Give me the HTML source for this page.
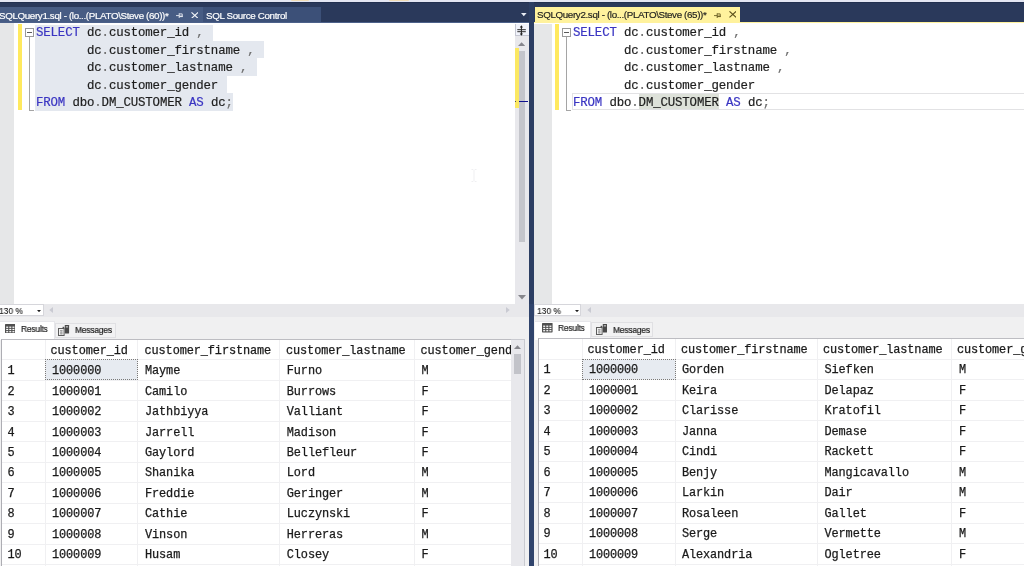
<!DOCTYPE html><html lang="en"><head><meta charset="utf-8"><title>SQL Server Management Studio</title><style>
*{box-sizing:border-box;margin:0;padding:0}
html,body{width:1024px;height:566px;overflow:hidden;background:#fff}
body{position:relative;font-family:"Liberation Sans", "DejaVu Sans", sans-serif;}
.a{position:absolute}
.ed,.gt,.tab,.ui{will-change:transform}
.ed{font-family:"Liberation Mono", "DejaVu Sans Mono", monospace;font-size:12.4px;letter-spacing:-0.15px;-webkit-text-stroke:0.2px;line-height:17.5px;white-space:pre;color:#1e1e1e;}
.ed .k{color:#3a35c2}
.ed .g{color:#6e6e6e}
.gr{font-family:"Liberation Mono", "DejaVu Sans Mono", monospace;font-size:11.9px;letter-spacing:-0.1px;-webkit-text-stroke:0.25px;line-height:20px;white-space:pre;color:#1a1a1a;}
.tab{font-family:"Liberation Sans", "DejaVu Sans", sans-serif;font-size:9.8px;letter-spacing:-0.36px;-webkit-text-stroke:0.18px;white-space:pre;line-height:16px}
.ui{font-family:"Liberation Sans", "DejaVu Sans", sans-serif;font-size:9.4px;transform:scaleX(0.9);transform-origin:0 0;white-space:pre;color:#1e1e1e}
</style></head><body>
<div class="a" style="left:0px;top:0px;width:1024px;height:3px;background:#e3e6f3;"></div>
<div class="a" style="left:0px;top:2.2px;width:1024px;height:21.2px;background:#2a395b;"></div>
<div class="a" style="left:0px;top:2.2px;width:1024px;height:1.3px;background:#223050;"></div>
<div class="a" style="left:290.5px;top:0px;width:18.5px;height:1.4px;background:#f0dcb6;border-radius:0 0 9px 9px"></div>
<div class="a" style="left:389px;top:0px;width:19.5px;height:1.4px;background:#f0dcb6;border-radius:0 0 9px 9px"></div>
<div class="a" style="left:0px;top:7px;width:202.5px;height:16.4px;background:#475c84;"></div>
<div class="a" style="left:202.5px;top:7px;width:118.5px;height:15px;background:#3c5078;"></div>
<div class="a" style="left:0px;top:22.1px;width:528.5px;height:1.3px;background:#4c618a;"></div>
<div class="a tab" style="left:-1px;top:7.6px;color:#fff">SQLQuery1.sql - (lo...(PLATO\Steve (60))*</div>
<div class="a tab" style="left:206px;top:7.6px;color:#fff">SQL Source Control</div>
<svg class="a" style="left:176.3px;top:12.8px" width="6.8" height="5.4" viewBox="0 0 6.8 5.4"><path d="M0 2.6H3.2M3.2 0.3V5.2M3.2 0.9H6.2V3.4M3.2 3.6H6.7" fill="none" stroke="#e6eaf2" stroke-width="0.9"/><path d="M3.2 3.2H6.7" stroke="#e6eaf2" stroke-width="1.1"/></svg>
<svg class="a" style="left:190.8px;top:11.5px" width="7.6" height="6.8" viewBox="0 0 7.6 6.8"><path d="M0.5 0.4L7.1 6.4M7.1 0.4L0.5 6.4" fill="none" stroke="#f0f3f8" stroke-width="1.15"/></svg>
<div class="a" style="left:535px;top:7px;width:205px;height:16.4px;background:#fff29d;"></div>
<div class="a" style="left:534px;top:22px;width:490px;height:1.4px;background:#fff29d;"></div>
<div class="a tab" style="left:536.6px;top:7.2px;color:#1e1e1e">SQLQuery2.sql - (lo...(PLATO\Steve (65))*</div>
<svg class="a" style="left:714.2px;top:12.9px" width="6.8" height="5.4" viewBox="0 0 6.8 5.4"><path d="M0 2.6H3.2M3.2 0.3V5.2M3.2 0.9H6.2V3.4M3.2 3.6H6.7" fill="none" stroke="#6a5d24" stroke-width="0.9"/><path d="M3.2 3.2H6.7" stroke="#6a5d24" stroke-width="1.1"/></svg>
<svg class="a" style="left:728.6px;top:11.4px" width="7.6" height="6.8" viewBox="0 0 7.6 6.8"><path d="M0.5 0.4L7.1 6.4M7.1 0.4L0.5 6.4" fill="none" stroke="#5a4e1a" stroke-width="1.15"/></svg>
<svg class="a" style="left:521px;top:13.2px" width="5.6" height="3.4" viewBox="0 0 7 4"><path d="M0 0H7L3.5 4Z" fill="#e8ecf4"/></svg>
<div class="a" style="left:528.5px;top:2.5px;width:5.5px;height:564px;background:#2d406a;"></div>
<div class="a" style="left:0px;top:23.4px;width:14px;height:280.6px;background:#e6e7e8;"></div>
<div class="a" style="left:17.5px;top:23.5px;width:4.5px;height:86.5px;background:#ffe95e;"></div>
<div class="a" style="left:35px;top:25.3px;width:177.7px;height:15.4px;background:#e4e8ef;"></div>
<div class="a" style="left:35px;top:40.7px;width:229px;height:17.5px;background:#e4e8ef;"></div>
<div class="a" style="left:35px;top:58.2px;width:221.7px;height:17.5px;background:#e4e8ef;"></div>
<div class="a" style="left:35px;top:75.7px;width:192.3px;height:17.5px;background:#e4e8ef;"></div>
<div class="a" style="left:35px;top:93.2px;width:197.7px;height:17.5px;background:#e4e8ef;"></div>
<div class="a" style="left:24.5px;top:28px;width:9px;height:9px;background:#fff;border:1px solid #9a9a9a"></div><div class="a" style="left:26.5px;top:32px;width:5px;height:1px;background:#5a5a5a;"></div><div class="a" style="left:28.5px;top:37px;width:1px;height:73.5px;background:#a5a5a5;"></div><div class="a" style="left:28.5px;top:110px;width:5px;height:1px;background:#a5a5a5;"></div>
<div class="a ed" style="left:35.7px;top:25.0px"><span class="k">SELECT</span> dc<span class="g">.</span>customer_id <span class="g">,</span>
       dc<span class="g">.</span>customer_firstname <span class="g">,</span>
       dc<span class="g">.</span>customer_lastname <span class="g">,</span>
       dc<span class="g">.</span>customer_gender
<span class="k">FROM</span> dbo<span class="g">.</span>DM_CUSTOMER <span class="k">AS</span> dc<span class="g">;</span></div>
<div class="a" style="left:515px;top:23.5px;width:13.5px;height:280.5px;background:#e8e8ec;"></div>
<div class="a" style="left:515px;top:23.7px;width:13.5px;height:12.6px;background:#f1f3fb;border:1px solid #c5c7d2;border-top:none;border-right:none"></div>
<svg class="a" style="left:516px;top:24.6px" width="11" height="11" viewBox="0 0 11 11"><path d="M5.4 1V10" stroke="#1e1e1e" stroke-width="1" fill="none"/><path d="M5.4 0.3L7 2.4H3.8ZM5.4 10.7L7 8.6H3.8Z" fill="#1e1e1e"/><path d="M1.3 4.7H9.8M1.3 6.7H9.8" stroke="#2a2a2a" stroke-width="1"/></svg>
<svg class="a" style="left:517.9px;top:41.8px" width="7.2" height="4" viewBox="0 0 7.2 4"><path d="M0 4H7.2L3.6 0.2Z" fill="#85858c"/></svg>
<div class="a" style="left:518.6px;top:50.5px;width:6.3px;height:191.5px;background:#c4c5cb;"></div>
<div class="a" style="left:515px;top:48.2px;width:3.6px;height:60px;background:#fbe862;"></div>
<div class="a" style="left:518.8px;top:100.8px;width:9.7px;height:1.6px;background:#10108e;"></div>
<div class="a" style="left:514.9px;top:101px;width:1.2px;height:1.2px;background:#4a4a55;"></div>
<svg class="a" style="left:518px;top:295px" width="8" height="5" viewBox="0 0 8 5"><path d="M0 0H8L4 4.5Z" fill="#86868c"/></svg>
<svg class="a" style="left:471px;top:169px" width="6" height="13" viewBox="0 0 6 13"><path d="M0.5 0.5H2.3M3.7 0.5H5.5M3 1V12M0.5 12.5H2.3M3.7 12.5H5.5" fill="none" stroke="#efeff1" stroke-width="1"/></svg>
<div class="a" style="left:534px;top:23.5px;width:18px;height:280.5px;background:#e6e7e8;"></div>
<div class="a" style="left:554.8px;top:23.5px;width:4.7px;height:86.5px;background:#ffe95e;"></div>
<div class="a" style="left:562px;top:28px;width:9px;height:9px;background:#fff;border:1px solid #9a9a9a"></div><div class="a" style="left:564px;top:32px;width:5px;height:1px;background:#5a5a5a;"></div><div class="a" style="left:566px;top:37px;width:1px;height:73.5px;background:#a5a5a5;"></div><div class="a" style="left:566px;top:110px;width:5px;height:1px;background:#a5a5a5;"></div>
<div class="a" style="left:571.5px;top:93.2px;width:460px;height:16.8px;background:#fff;border:1px solid #e2e2e4"></div>
<div class="a" style="left:638.6px;top:94px;width:80.3px;height:15.2px;background:#dde1d9;"></div>
<div class="a ed" style="left:573px;top:25.0px"><span class="k">SELECT</span> dc<span class="g">.</span>customer_id <span class="g">,</span>
       dc<span class="g">.</span>customer_firstname <span class="g">,</span>
       dc<span class="g">.</span>customer_lastname <span class="g">,</span>
       dc<span class="g">.</span>customer_gender
<span class="k">FROM</span> dbo<span class="g">.</span>DM_CUSTOMER <span class="k">AS</span> dc<span class="g">;</span></div>
<div class="a" style="left:0px;top:304px;width:528.5px;height:262px;background:#f0f0f1;"></div>
<div class="a" style="left:534px;top:304px;width:490px;height:262px;background:#f0f0f1;"></div>
<div class="a" style="left:0px;top:304px;width:528.5px;height:12.7px;background:#e8e8eb;"></div><div class="a" style="left:-3.6px;top:303.7px;width:47.2px;height:12.6px;background:#fff;border:1px solid #d6d6db"></div><div class="a ui" style="left:-0.8000000000000003px;top:304.5px;line-height:12px;-webkit-text-stroke:0.15px">130 %</div><svg class="a" style="left:37.199999999999996px;top:309.8px" width="4" height="2.2" viewBox="0 0 4 2.2"><path d="M0 0H4L2 2.2Z" fill="#1e1e1e"/></svg><svg class="a" style="left:49.199999999999996px;top:307.3px" width="4" height="6" viewBox="0 0 4 6"><path d="M4 0V6L0.3 3Z" fill="#c9cad2"/></svg><svg class="a" style="left:505.5px;top:307.3px" width="4" height="6" viewBox="0 0 4 6"><path d="M0 0V6L3.7 3Z" fill="#c9cad2"/></svg><div class="a" style="left:-2.3px;top:321.2px;width:56.9px;height:19px;background:#fff;border-top:1px solid #e6e6ea;border-right:1px solid #e6e6ea"></div><div class="a" style="left:54.599999999999994px;top:322.5px;width:61.3px;height:15.3px;background:#f2f2f3;border:1px solid #e0e0e3"></div><svg class="a" style="left:4.65px;top:324.0px" width="10.6" height="9.4" viewBox="0 0 10.6 9.4"><rect x="0" y="0" width="10.6" height="9.4" rx="0.6" fill="#505050"/><rect x="1.2" y="2.6" width="2" height="1.25" fill="#fff"/><rect x="4.3" y="2.6" width="2" height="1.25" fill="#fff"/><rect x="7.4" y="2.6" width="2" height="1.25" fill="#fff"/><rect x="1.2" y="4.85" width="2" height="1.25" fill="#fff"/><rect x="4.3" y="4.85" width="2" height="1.25" fill="#fff"/><rect x="7.4" y="4.85" width="2" height="1.25" fill="#fff"/><rect x="1.2" y="7.1" width="2" height="1.25" fill="#fff"/><rect x="4.3" y="7.1" width="2" height="1.25" fill="#fff"/><rect x="7.4" y="7.1" width="2" height="1.25" fill="#fff"/></svg><div class="a ui" style="left:20.5px;top:323.15px;line-height:12px;letter-spacing:-0.25px;-webkit-text-stroke:0.2px">Results</div><svg class="a" style="left:58.3px;top:324.7px" width="11.4" height="11" viewBox="0 0 11.4 11"><rect x="0.5" y="3.5" width="5.6" height="7" fill="#f1f1f1" stroke="#5c5c5c"/><path d="M2 5.6H4.6M2 7.2H4.6M2 8.8H4.6" stroke="#8a8a8a" stroke-width="0.8"/><rect x="2.6" y="5" width="1.6" height="4.6" fill="#9c9c9c" opacity="0.55"/><rect x="6.8" y="0.1" width="4.3" height="8.3" rx="0.4" fill="#484848"/><rect x="7.8" y="1" width="2.3" height="1.6" fill="#a9a9a9"/><rect x="4.6" y="1.8" width="1.7" height="1.9" fill="#505050"/></svg><div class="a ui" style="left:75.2px;top:324.4px;line-height:12px;letter-spacing:-0.22px;-webkit-text-stroke:0.2px">Messages</div><div class="a" style="left:0.5px;top:339px;width:524.5px;height:227px;background:#fff;border-top:1px solid #bdbdc2;border-left:1px solid #adadb3"></div><div class="a" style="left:44.5px;top:359.4px;width:93.19999999999999px;height:20.99px;background:#e7ebf1;"></div><div class="a" style="left:1.5px;top:359.4px;width:523.5px;height:1px;background:#f0f0f2;"></div><div class="a" style="left:1.5px;top:379.9px;width:523.5px;height:1px;background:#f0f0f2;"></div><div class="a" style="left:1.5px;top:400.4px;width:523.5px;height:1px;background:#f0f0f2;"></div><div class="a" style="left:1.5px;top:420.9px;width:523.5px;height:1px;background:#f0f0f2;"></div><div class="a" style="left:1.5px;top:441.4px;width:523.5px;height:1px;background:#f0f0f2;"></div><div class="a" style="left:1.5px;top:461.8px;width:523.5px;height:1px;background:#f0f0f2;"></div><div class="a" style="left:1.5px;top:482.3px;width:523.5px;height:1px;background:#f0f0f2;"></div><div class="a" style="left:1.5px;top:502.8px;width:523.5px;height:1px;background:#f0f0f2;"></div><div class="a" style="left:1.5px;top:523.3px;width:523.5px;height:1px;background:#f0f0f2;"></div><div class="a" style="left:1.5px;top:543.8px;width:523.5px;height:1px;background:#f0f0f2;"></div><div class="a" style="left:1.5px;top:564.3px;width:523.5px;height:1px;background:#f0f0f2;"></div><div class="a" style="left:44.5px;top:340px;width:1px;height:227px;background:#f0f0f2;"></div><div class="a" style="left:137.2px;top:340px;width:1px;height:227px;background:#f0f0f2;"></div><div class="a" style="left:279.2px;top:340px;width:1px;height:227px;background:#f0f0f2;"></div><div class="a" style="left:414.3px;top:340px;width:1px;height:227px;background:#f0f0f2;"></div><div class="a" style="left:44.5px;top:359.4px;width:93.19999999999999px;height:20.99px;background:transparent;border:1px dotted #7a7a7a"></div><div class="a gt" style="left:0.5px;top:339px;width:510.8px;height:227px;overflow:hidden"><div class="a gr" style="left:49.5px;top:2.2px">customer_id</div><div class="a gr" style="left:143.5px;top:2.2px">customer_firstname</div><div class="a gr" style="left:285.0px;top:2.2px">customer_lastname</div><div class="a gr" style="left:419.5px;top:2.2px">customer_gender</div><div class="a gr" style="left:6.5px;top:22.0px">1</div><div class="a gr" style="left:51.0px;top:22.0px">1000000</div><div class="a gr" style="left:144.0px;top:22.0px">Mayme</div><div class="a gr" style="left:285.8px;top:22.0px">Furno</div><div class="a gr" style="left:420.5px;top:22.0px">M</div><div class="a gr" style="left:6.5px;top:42.5px">2</div><div class="a gr" style="left:51.0px;top:42.5px">1000001</div><div class="a gr" style="left:144.0px;top:42.5px">Camilo</div><div class="a gr" style="left:285.8px;top:42.5px">Burrows</div><div class="a gr" style="left:420.5px;top:42.5px">F</div><div class="a gr" style="left:6.5px;top:63.0px">3</div><div class="a gr" style="left:51.0px;top:63.0px">1000002</div><div class="a gr" style="left:144.0px;top:63.0px">Jathbiyya</div><div class="a gr" style="left:285.8px;top:63.0px">Valliant</div><div class="a gr" style="left:420.5px;top:63.0px">F</div><div class="a gr" style="left:6.5px;top:83.5px">4</div><div class="a gr" style="left:51.0px;top:83.5px">1000003</div><div class="a gr" style="left:144.0px;top:83.5px">Jarrell</div><div class="a gr" style="left:285.8px;top:83.5px">Madison</div><div class="a gr" style="left:420.5px;top:83.5px">F</div><div class="a gr" style="left:6.5px;top:104.0px">5</div><div class="a gr" style="left:51.0px;top:104.0px">1000004</div><div class="a gr" style="left:144.0px;top:104.0px">Gaylord</div><div class="a gr" style="left:285.8px;top:104.0px">Bellefleur</div><div class="a gr" style="left:420.5px;top:104.0px">F</div><div class="a gr" style="left:6.5px;top:124.4px">6</div><div class="a gr" style="left:51.0px;top:124.4px">1000005</div><div class="a gr" style="left:144.0px;top:124.4px">Shanika</div><div class="a gr" style="left:285.8px;top:124.4px">Lord</div><div class="a gr" style="left:420.5px;top:124.4px">M</div><div class="a gr" style="left:6.5px;top:144.9px">7</div><div class="a gr" style="left:51.0px;top:144.9px">1000006</div><div class="a gr" style="left:144.0px;top:144.9px">Freddie</div><div class="a gr" style="left:285.8px;top:144.9px">Geringer</div><div class="a gr" style="left:420.5px;top:144.9px">M</div><div class="a gr" style="left:6.5px;top:165.4px">8</div><div class="a gr" style="left:51.0px;top:165.4px">1000007</div><div class="a gr" style="left:144.0px;top:165.4px">Cathie</div><div class="a gr" style="left:285.8px;top:165.4px">Luczynski</div><div class="a gr" style="left:420.5px;top:165.4px">F</div><div class="a gr" style="left:6.5px;top:185.9px">9</div><div class="a gr" style="left:51.0px;top:185.9px">1000008</div><div class="a gr" style="left:144.0px;top:185.9px">Vinson</div><div class="a gr" style="left:285.8px;top:185.9px">Herreras</div><div class="a gr" style="left:420.5px;top:185.9px">M</div><div class="a gr" style="left:6.5px;top:206.4px">10</div><div class="a gr" style="left:51.0px;top:206.4px">1000009</div><div class="a gr" style="left:144.0px;top:206.4px">Husam</div><div class="a gr" style="left:285.8px;top:206.4px">Closey</div><div class="a gr" style="left:420.5px;top:206.4px">F</div></div><div class="a" style="left:511.3px;top:339px;width:13.7px;height:227px;background:#e8e8ec;border-top:1px solid #c9cad0;border-right:1px solid #c9cad0"></div><svg class="a" style="left:514.3px;top:344.5px" width="7" height="4" viewBox="0 0 7 4"><path d="M0 4H7L3.5 0.3Z" fill="#86868c"/></svg><div class="a" style="left:514.3px;top:353.5px;width:6.7px;height:20.5px;background:#c2c3c9;"></div>
<div class="a" style="left:534px;top:304px;width:490px;height:12.7px;background:#e8e8eb;"></div><div class="a" style="left:534.0px;top:303.7px;width:47.2px;height:12.6px;background:#fff;border:1px solid #d6d6db"></div><div class="a ui" style="left:536.8px;top:304.5px;line-height:12px;-webkit-text-stroke:0.15px">130 %</div><svg class="a" style="left:574.8px;top:309.8px" width="4" height="2.2" viewBox="0 0 4 2.2"><path d="M0 0H4L2 2.2Z" fill="#1e1e1e"/></svg><svg class="a" style="left:586.8px;top:307.3px" width="4" height="6" viewBox="0 0 4 6"><path d="M4 0V6L0.3 3Z" fill="#c9cad2"/></svg><div class="a" style="left:535.3px;top:320.5px;width:56px;height:19px;background:#fff;border-top:1px solid #e6e6ea;border-right:1px solid #e6e6ea"></div><div class="a" style="left:591.3px;top:321.8px;width:61.3px;height:15.3px;background:#f2f2f3;border:1px solid #e0e0e3"></div><svg class="a" style="left:542.25px;top:323.3px" width="10.6" height="9.4" viewBox="0 0 10.6 9.4"><rect x="0" y="0" width="10.6" height="9.4" rx="0.6" fill="#505050"/><rect x="1.2" y="2.6" width="2" height="1.25" fill="#fff"/><rect x="4.3" y="2.6" width="2" height="1.25" fill="#fff"/><rect x="7.4" y="2.6" width="2" height="1.25" fill="#fff"/><rect x="1.2" y="4.85" width="2" height="1.25" fill="#fff"/><rect x="4.3" y="4.85" width="2" height="1.25" fill="#fff"/><rect x="7.4" y="4.85" width="2" height="1.25" fill="#fff"/><rect x="1.2" y="7.1" width="2" height="1.25" fill="#fff"/><rect x="4.3" y="7.1" width="2" height="1.25" fill="#fff"/><rect x="7.4" y="7.1" width="2" height="1.25" fill="#fff"/></svg><div class="a ui" style="left:558.1px;top:322.45px;line-height:12px;letter-spacing:-0.25px;-webkit-text-stroke:0.2px">Results</div><svg class="a" style="left:595.9px;top:324px" width="11.4" height="11" viewBox="0 0 11.4 11"><rect x="0.5" y="3.5" width="5.6" height="7" fill="#f1f1f1" stroke="#5c5c5c"/><path d="M2 5.6H4.6M2 7.2H4.6M2 8.8H4.6" stroke="#8a8a8a" stroke-width="0.8"/><rect x="2.6" y="5" width="1.6" height="4.6" fill="#9c9c9c" opacity="0.55"/><rect x="6.8" y="0.1" width="4.3" height="8.3" rx="0.4" fill="#484848"/><rect x="7.8" y="1" width="2.3" height="1.6" fill="#a9a9a9"/><rect x="4.6" y="1.8" width="1.7" height="1.9" fill="#505050"/></svg><div class="a ui" style="left:612.8px;top:323.7px;line-height:12px;letter-spacing:-0.22px;-webkit-text-stroke:0.2px">Messages</div><div class="a" style="left:538.1px;top:338.4px;width:485.9px;height:227.60000000000002px;background:#fff;border-top:1px solid #bdbdc2;border-left:1px solid #adadb3"></div><div class="a" style="left:582.3px;top:358.79999999999995px;width:93.40000000000009px;height:20.99px;background:#e7ebf1;"></div><div class="a" style="left:539.1px;top:358.8px;width:484.9px;height:1px;background:#f0f0f2;"></div><div class="a" style="left:539.1px;top:379.3px;width:484.9px;height:1px;background:#f0f0f2;"></div><div class="a" style="left:539.1px;top:399.8px;width:484.9px;height:1px;background:#f0f0f2;"></div><div class="a" style="left:539.1px;top:420.3px;width:484.9px;height:1px;background:#f0f0f2;"></div><div class="a" style="left:539.1px;top:440.8px;width:484.9px;height:1px;background:#f0f0f2;"></div><div class="a" style="left:539.1px;top:461.2px;width:484.9px;height:1px;background:#f0f0f2;"></div><div class="a" style="left:539.1px;top:481.7px;width:484.9px;height:1px;background:#f0f0f2;"></div><div class="a" style="left:539.1px;top:502.2px;width:484.9px;height:1px;background:#f0f0f2;"></div><div class="a" style="left:539.1px;top:522.7px;width:484.9px;height:1px;background:#f0f0f2;"></div><div class="a" style="left:539.1px;top:543.2px;width:484.9px;height:1px;background:#f0f0f2;"></div><div class="a" style="left:539.1px;top:563.7px;width:484.9px;height:1px;background:#f0f0f2;"></div><div class="a" style="left:582.3px;top:339.4px;width:1px;height:227.60000000000002px;background:#f0f0f2;"></div><div class="a" style="left:675.2px;top:339.4px;width:1px;height:227.60000000000002px;background:#f0f0f2;"></div><div class="a" style="left:817.2px;top:339.4px;width:1px;height:227.60000000000002px;background:#f0f0f2;"></div><div class="a" style="left:951.3px;top:339.4px;width:1px;height:227.60000000000002px;background:#f0f0f2;"></div><div class="a" style="left:582.3px;top:358.79999999999995px;width:93.40000000000009px;height:20.99px;background:transparent;border:1px dotted #7a7a7a"></div><div class="a gt" style="left:538.1px;top:338.4px;width:485.9px;height:227.60000000000002px;overflow:hidden"><div class="a gr" style="left:49.4px;top:1.9px">customer_id</div><div class="a gr" style="left:142.9px;top:1.9px">customer_firstname</div><div class="a gr" style="left:284.9px;top:1.9px">customer_lastname</div><div class="a gr" style="left:418.9px;top:1.9px">customer_gender</div><div class="a gr" style="left:5.4px;top:22.1px">1</div><div class="a gr" style="left:50.9px;top:22.1px">1000000</div><div class="a gr" style="left:143.9px;top:22.1px">Gorden</div><div class="a gr" style="left:286.5px;top:22.1px">Siefken</div><div class="a gr" style="left:421.1px;top:22.1px">M</div><div class="a gr" style="left:5.4px;top:42.6px">2</div><div class="a gr" style="left:50.9px;top:42.6px">1000001</div><div class="a gr" style="left:143.9px;top:42.6px">Keira</div><div class="a gr" style="left:286.5px;top:42.6px">Delapaz</div><div class="a gr" style="left:421.1px;top:42.6px">F</div><div class="a gr" style="left:5.4px;top:63.1px">3</div><div class="a gr" style="left:50.9px;top:63.1px">1000002</div><div class="a gr" style="left:143.9px;top:63.1px">Clarisse</div><div class="a gr" style="left:286.5px;top:63.1px">Kratofil</div><div class="a gr" style="left:421.1px;top:63.1px">F</div><div class="a gr" style="left:5.4px;top:83.6px">4</div><div class="a gr" style="left:50.9px;top:83.6px">1000003</div><div class="a gr" style="left:143.9px;top:83.6px">Janna</div><div class="a gr" style="left:286.5px;top:83.6px">Demase</div><div class="a gr" style="left:421.1px;top:83.6px">F</div><div class="a gr" style="left:5.4px;top:104.1px">5</div><div class="a gr" style="left:50.9px;top:104.1px">1000004</div><div class="a gr" style="left:143.9px;top:104.1px">Cindi</div><div class="a gr" style="left:286.5px;top:104.1px">Rackett</div><div class="a gr" style="left:421.1px;top:104.1px">F</div><div class="a gr" style="left:5.4px;top:124.5px">6</div><div class="a gr" style="left:50.9px;top:124.5px">1000005</div><div class="a gr" style="left:143.9px;top:124.5px">Benjy</div><div class="a gr" style="left:286.5px;top:124.5px">Mangicavallo</div><div class="a gr" style="left:421.1px;top:124.5px">M</div><div class="a gr" style="left:5.4px;top:145.0px">7</div><div class="a gr" style="left:50.9px;top:145.0px">1000006</div><div class="a gr" style="left:143.9px;top:145.0px">Larkin</div><div class="a gr" style="left:286.5px;top:145.0px">Dair</div><div class="a gr" style="left:421.1px;top:145.0px">M</div><div class="a gr" style="left:5.4px;top:165.5px">8</div><div class="a gr" style="left:50.9px;top:165.5px">1000007</div><div class="a gr" style="left:143.9px;top:165.5px">Rosaleen</div><div class="a gr" style="left:286.5px;top:165.5px">Gallet</div><div class="a gr" style="left:421.1px;top:165.5px">F</div><div class="a gr" style="left:5.4px;top:186.0px">9</div><div class="a gr" style="left:50.9px;top:186.0px">1000008</div><div class="a gr" style="left:143.9px;top:186.0px">Serge</div><div class="a gr" style="left:286.5px;top:186.0px">Vermette</div><div class="a gr" style="left:421.1px;top:186.0px">M</div><div class="a gr" style="left:5.4px;top:206.5px">10</div><div class="a gr" style="left:50.9px;top:206.5px">1000009</div><div class="a gr" style="left:143.9px;top:206.5px">Alexandria</div><div class="a gr" style="left:286.5px;top:206.5px">Ogletree</div><div class="a gr" style="left:421.1px;top:206.5px">F</div></div>
<div class="a" style="left:528.7px;top:2.2px;width:5.4px;height:302px;background:#2c3e63;"></div>
<div class="a" style="left:528.7px;top:304px;width:5.6px;height:262px;background:#30446c;"></div>
</body></html>
